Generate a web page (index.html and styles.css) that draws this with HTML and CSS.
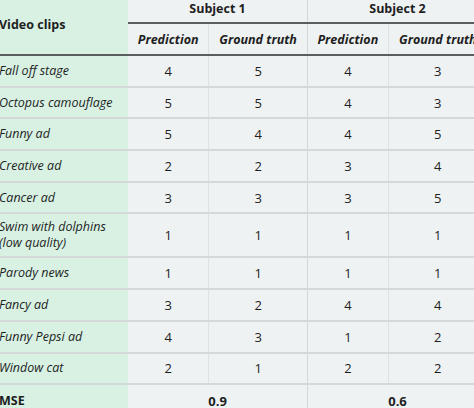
FILE: index.html
```html
<!DOCTYPE html>
<html>
<head>
<meta charset="utf-8">
<link rel="stylesheet" href="styles.css">
</head>
<body>
<table class="results">
  <colgroup>
    <col class="c-clip">
    <col class="c-pred">
    <col class="c-gt">
    <col class="c-pred">
    <col class="c-gt">
  </colgroup>
  <thead>
    <tr class="h1">
      <th class="clip-h" rowspan="2">Video clips</th>
      <th class="subj sep" colspan="2">Subject 1</th>
      <th class="subj" colspan="2">Subject 2</th>
    </tr>
    <tr class="h2">
      <th class="sub vsep">Prediction</th>
      <th class="sub sep">Ground truth</th>
      <th class="sub vsep">Prediction</th>
      <th class="sub">Ground truth</th>
    </tr>
  </thead>
  <tbody>
    <tr><td class="clip">Fall off stage</td><td class="vsep">4</td><td class="sep">5</td><td class="vsep">4</td><td>3</td></tr>
    <tr><td class="clip">Octopus camouflage</td><td class="vsep">5</td><td class="sep">5</td><td class="vsep">4</td><td>3</td></tr>
    <tr><td class="clip">Funny ad</td><td class="vsep">5</td><td class="sep">4</td><td class="vsep">4</td><td>5</td></tr>
    <tr><td class="clip">Creative ad</td><td class="vsep">2</td><td class="sep">2</td><td class="vsep">3</td><td>4</td></tr>
    <tr><td class="clip">Cancer ad</td><td class="vsep">3</td><td class="sep">3</td><td class="vsep">3</td><td>5</td></tr>
    <tr class="tall"><td class="clip">Swim with dolphins<br>(low quality)</td><td class="vsep">1</td><td class="sep">1</td><td class="vsep">1</td><td>1</td></tr>
    <tr><td class="clip">Parody news</td><td class="vsep">1</td><td class="sep">1</td><td class="vsep">1</td><td>1</td></tr>
    <tr><td class="clip">Fancy ad</td><td class="vsep">3</td><td class="sep">2</td><td class="vsep">4</td><td>4</td></tr>
    <tr><td class="clip">Funny Pepsi ad</td><td class="vsep">4</td><td class="sep">3</td><td class="vsep">1</td><td>2</td></tr>
    <tr><td class="clip">Window cat</td><td class="vsep">2</td><td class="sep">1</td><td class="vsep">2</td><td>2</td></tr>
    <tr class="mse"><td class="clip mse-l">MSE</td><td class="sep mse-v" colspan="2">0.9</td><td class="mse-v" colspan="2">0.6</td></tr>
  </tbody>
</table>
</body>
</html>
```

FILE: styles.css
```css
html, body {
  margin: 0;
  padding: 0;
  background: #eef2f3;
  overflow: hidden;
}

.results {
  border-collapse: collapse;
  table-layout: fixed;
  width: 491px;
  margin-left: -4px;
  font-family: "Open Sans", "Noto Sans", sans-serif;
  font-size: 13px;
  color: #1e1e1e;
  background: #eef2f3;
}

.c-clip { width: 131px; }
.c-pred { width: 80px; }
.c-gt { width: 98px; }

th, td {
  padding: 0;
  text-align: center;
  vertical-align: middle;
}

.clip-h {
  background: #d8f1e3;
  text-align: left;
  padding-left: 3px;
  font-weight: 700;
  font-size: 12.5px;
  vertical-align: middle;
  padding-bottom: 5px;
  border-bottom: 2px solid #5b5e5e;
}

.h1 { height: 22px; }
.h2 { height: 32px; }

.subj {
  font-weight: 700;
  font-size: 12.5px;
  border-bottom: 2px solid #5b5e5e;
  padding-bottom: 5px;
}

.sub {
  font-style: italic;
  font-weight: 700;
  font-size: 12.5px;
  border-bottom: 2px solid #5b5e5e;
}

tbody tr { height: 31.7px; }
tbody tr.tall { height: 44px; }

tbody td {
  border-bottom: 2px solid #d4d8d9;
}

tbody tr.mse td { border-bottom: none; }

.clip {
  background: #d8f1e3;
  text-align: left;
  padding-left: 3px;
  font-style: italic;
  font-size: 12.5px;
  line-height: 16px;
}

.sep { border-right: 1px solid #d2d6d7; }
.vsep { border-right: 1px solid #dde1e2; }

.mse-l {
  font-style: normal;
  font-weight: 700;
}

.mse-v { font-weight: 700; }
```
